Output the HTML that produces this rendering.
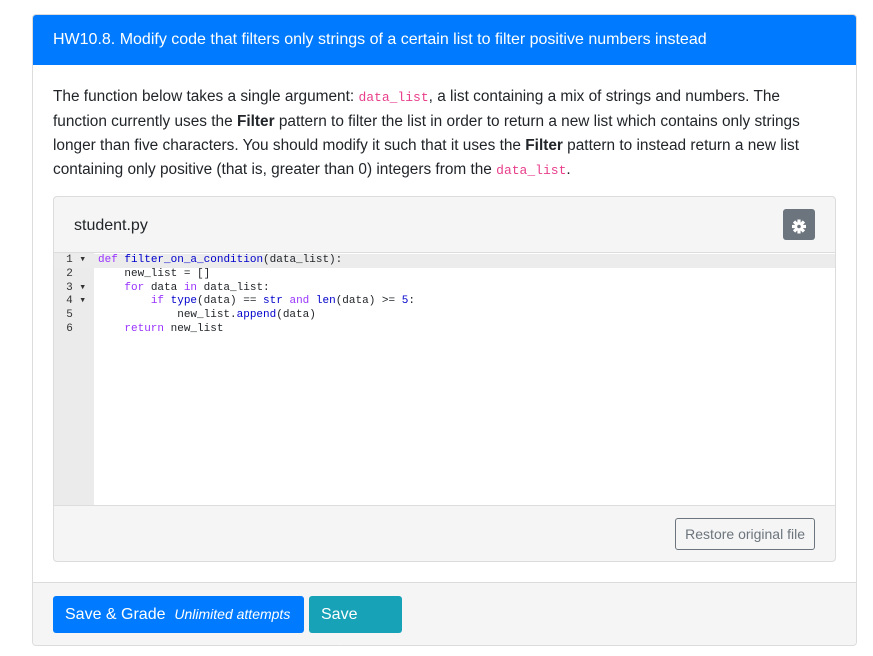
<!DOCTYPE html>
<html><head><style>
body{margin:0;background:#fff;font-family:"Liberation Sans",sans-serif;color:#212529}
.card{position:absolute;left:32px;top:14px;width:823px;height:630px;border:1px solid #dcdcdc;border-radius:4px;overflow:hidden}
.hdr{background:#007bff;color:#fff;height:50px;line-height:50px;padding-left:20px;font-size:16px}
.body{padding:20px 20px 0 20px;font-size:15.4px;line-height:24px}
code{font-family:"Liberation Mono",monospace;color:#e83e8c;font-size:13px}
.ed{position:absolute;left:20px;top:181px;width:781px;height:364px;border:1px solid #dcdcdc;border-radius:4px;background:#f5f5f5;overflow:hidden}
.edh{height:55px;line-height:58px;padding-left:20px;font-size:16px;position:relative;border-bottom:1px solid #ddd}
.gear{position:absolute;right:20px;top:12px;width:32px;height:31px;background:#6c757d;border-radius:3px}
.code{position:absolute;top:56px;left:0;right:0;height:252px;background:#fff;border-bottom:1px solid #ddd}
.gut{position:absolute;left:0;top:0;bottom:0;width:40px;background:#ebebeb}
pre{margin:0;font-family:"Liberation Mono",monospace;font-size:11px;line-height:13.8px;position:absolute;top:1px;left:0;right:0}
.ln{position:absolute;left:0;width:32px;text-align:right;color:#333}
.k{color:#93f}.f{color:#333}
.act{position:absolute;top:1px;left:0;right:0;height:14px;background:#ececec}
.rb{position:absolute;right:20px;top:321px;border:1px solid #6c757d;border-radius:3px;color:#6c757d;font-size:14px;padding:7px 9px;background:#f5f5f5}
.ft{position:absolute;left:0;right:0;top:567px;bottom:0;background:#f5f5f5;border-top:1px solid #dcdcdc}
.b{position:absolute;top:13px;height:37px;line-height:37px;color:#fff;border-radius:3px;font-size:16px;padding:0 12px}
</style></head><body>
<div class="card">
<div class="hdr">HW10.8. Modify code that filters only strings of a certain list to filter positive numbers instead</div>
<div class="body">The function below takes a single argument: <code>data_list</code>, a list containing a mix of strings and numbers. The function currently uses the <b>Filter</b> pattern to filter the list in order to return a new list which contains only strings longer than five characters. You should modify it such that it uses the <b>Filter</b> pattern to instead return a new list containing only positive (that is, greater than 0) integers from the <code>data_list</code>.</div>
<div class="ed">
<div class="edh">student.py<div class="gear"><svg width="32" height="31" viewBox="0 0 32 31"><g fill="#fff" transform="translate(16 15.5)"><circle r="4.5"/><g id="t"><rect x="-1.6" y="-7" width="3.2" height="14"/></g><use href="#t" transform="rotate(45)"/><use href="#t" transform="rotate(90)"/><use href="#t" transform="rotate(135)"/><circle r="1.8" fill="#6c757d"/></g></svg></div></div>
<div class="code"><div class="gut"></div><div class="act"></div>
<pre><span class="ln">1 ▾<br>2  <br>3 ▾<br>4 ▾<br>5  <br>6  </span><span style="position:absolute;left:44px"><span class="k">def</span> <span style="color:#00c">filter_on_a_condition</span>(data_list):
    new_list = []
    <span class="k">for</span> data <span class="k">in</span> data_list:
        <span class="k">if</span> <span style="color:#00c">type</span>(data) == <span style="color:#00c">str</span> <span class="k">and</span> <span style="color:#00c">len</span>(data) &gt;= <span style="color:#00c">5</span>:
            new_list.<span style="color:#00c">append</span>(data)
    <span class="k">return</span> new_list</span></pre></div>
<div class="rb">Restore original file</div>
</div>
<div class="ft">
<div class="b" style="left:20px;width:227px;background:#007bff">Save &amp; Grade &nbsp;<i style="font-size:14px">Unlimited attempts</i></div>
<div class="b" style="left:276px;width:69px;background:#17a2b8">Save only</div>
</div>
</div>
</body></html>
